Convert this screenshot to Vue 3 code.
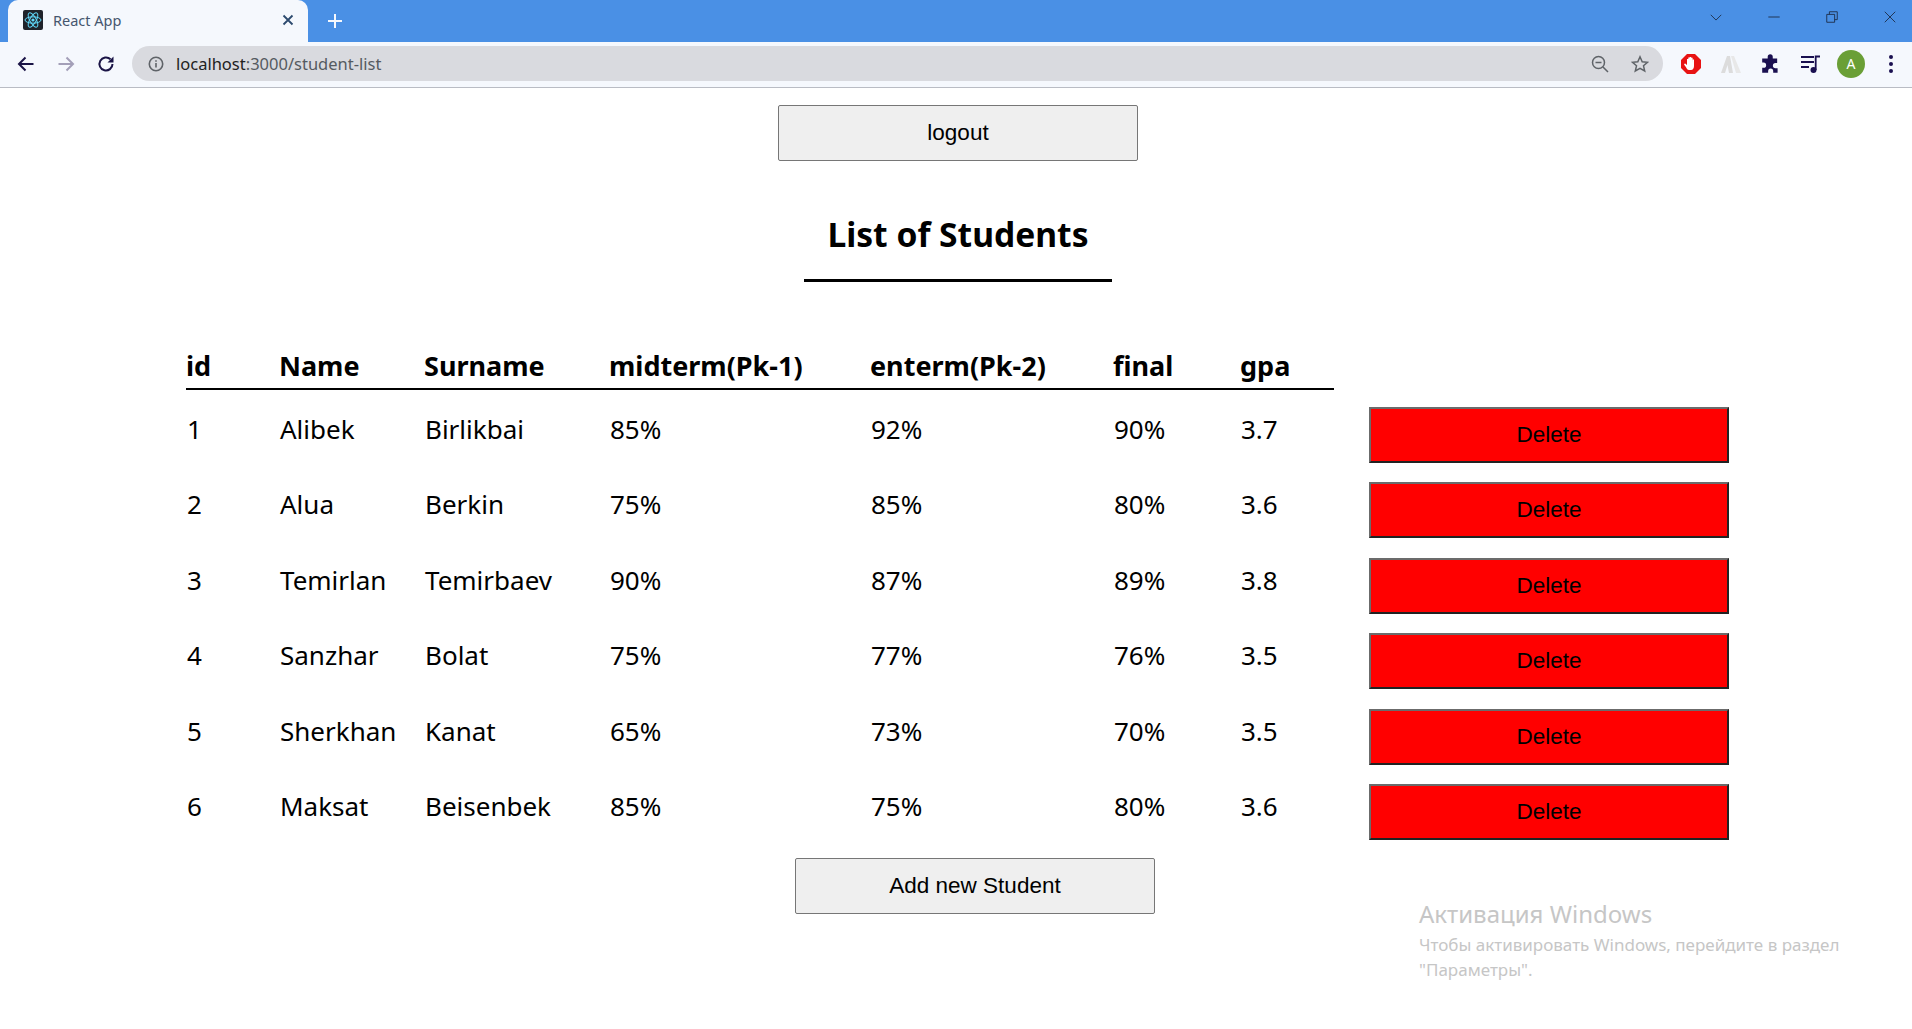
<template>
  <div class="page">
    <!-- Browser chrome -->
    <header class="tabstrip">
      <div class="tab">
        <svg class="favicon" viewBox="0 0 20 20">
          <rect width="20" height="20" rx="2" fill="#20232a" />
          <g fill="none" stroke="#61dafb" stroke-width="1">
            <ellipse cx="10" cy="10" rx="8" ry="3.2" />
            <ellipse cx="10" cy="10" rx="8" ry="3.2" transform="rotate(60 10 10)" />
            <ellipse cx="10" cy="10" rx="8" ry="3.2" transform="rotate(120 10 10)" />
          </g>
          <circle cx="10" cy="10" r="1.6" fill="#61dafb" />
        </svg>
        <span class="tab-title">React App</span>
        <svg class="tab-close" viewBox="0 0 12 12">
          <path d="M1.5 1.5l9 9M10.5 1.5l-9 9" stroke="#2c4a6e" stroke-width="1.8" fill="none" />
        </svg>
      </div>
      <svg class="new-tab" viewBox="0 0 16 16">
        <path d="M8 1v14M1 8h14" stroke="#f5f8fd" stroke-width="2" fill="none" />
      </svg>
      <div class="win-controls">
        <svg viewBox="0 0 16 16" class="win-icon"><path d="M2 5.5l6 6 6-6" stroke="#1c2a44" stroke-width="1" fill="none" /></svg>
        <svg viewBox="0 0 16 16" class="win-icon"><path d="M1.5 8h13" stroke="#1c2a44" stroke-width="1" fill="none" /></svg>
        <svg viewBox="0 0 16 16" class="win-icon"><path d="M2 5h9v9H2zM5 5V2h9v9h-3" stroke="#1c2a44" stroke-width="1" fill="none" /></svg>
        <svg viewBox="0 0 16 16" class="win-icon"><path d="M2 2l12 12M14 2L2 14" stroke="#1c2a44" stroke-width="1" fill="none" /></svg>
      </div>
    </header>

    <nav class="toolbar">
      <svg class="nav-icon" viewBox="0 0 20 20"><path d="M17.5 10H3.5M9.5 3.5L3 10l6.500 6.500" stroke="#1a1446" stroke-width="2" fill="none" /></svg>
      <svg class="nav-icon" viewBox="0 0 20 20"><path d="M2.500 10h14M10.500 3.500L17 10l-6.500 6.500" stroke="#a39fb8" stroke-width="2" fill="none" /></svg>
      <svg class="nav-icon" viewBox="0 0 20 20">
        <path d="M16.500 10a6.500 6.500 0 1 1-2-4.700" stroke="#1a1446" stroke-width="2" fill="none" />
        <path d="M17.500 2.500v6h-6z" fill="#1a1446" />
      </svg>
      <div class="omnibox">
        <svg class="info" viewBox="0 0 16 16">
          <circle cx="8" cy="8" r="6.700" stroke="#5f6368" stroke-width="1.600" fill="none" />
          <path d="M8 7v4.500M8 4.300v1.500" stroke="#5f6368" stroke-width="1.600" fill="none" />
        </svg>
        <span class="url">localhost<span class="url-dim">:3000/student-list</span></span>
        <svg class="omni-icon zoom-out" viewBox="0 0 18 18">
          <circle cx="7.500" cy="7.500" r="6" stroke="#5f6368" stroke-width="1.500" fill="none" />
          <path d="M12 12l5 5M4.500 7.500h6" stroke="#5f6368" stroke-width="1.500" fill="none" />
        </svg>
        <svg class="omni-icon star" viewBox="0 0 18 18">
          <path d="M9 1.800l2.200 4.900 5.300.6-4 3.500 1.200 5.200L9 13.300 4.300 16l1.200-5.200-4-3.500 5.300-.6z" stroke="#5f6368" stroke-width="1.500" fill="none" />
        </svg>
      </div>
      <div class="extensions">
        <svg class="ext" viewBox="0 0 22 22">
          <path d="M7 1h8l6 6v8l-6 6H7l-6-6V7z" fill="#e81313" />
          <path d="M7 16c-1-2-2.500-3.500-3-5l1.200-.6L7 12V6h1.300v4.500V4.500h1.400V10V4h1.500v6V4.800h1.400V10l.1-3.500h1.300V13c0 2-1 4-3 4H9c-.8 0-1.500-.4-2-1z" fill="#fff" />
        </svg>
        <svg class="ext" viewBox="0 0 22 22">
          <path d="M1 20L7 3h3l3 17h-4L7.500 12 5 20z" fill="#dcdcdc" />
          <path d="M11 3h3l7 17h-5z" fill="#e8e8e8" />
        </svg>
        <svg class="ext" viewBox="0 0 20 20">
          <path d="M7 3.500a2.300 2.300 0 0 1 4.600 0V5h4v4h-1.500a2.400 2.400 0 0 0 0 4.800H16V18H12v-1.500a2.300 2.300 0 0 0-4.600 0V18H2v-4.500h1.200a2.400 2.400 0 0 0 0-4.800H2V5h5z" fill="#1a1050" />
        </svg>
        <svg class="ext" viewBox="0 0 22 22">
          <path d="M1 4h13M1 9h13M1 14h8" stroke="#1a1050" stroke-width="1.800" fill="none" />
          <circle cx="13.500" cy="17" r="3" fill="#1a1050" />
          <path d="M15.700 17V3.500H20" stroke="#1a1050" stroke-width="1.800" fill="none" />
        </svg>
        <div class="avatar">A</div>
        <svg class="ext menu" viewBox="0 0 6 20">
          <circle cx="3" cy="3" r="2" fill="#1a1050" />
          <circle cx="3" cy="10" r="2" fill="#1a1050" />
          <circle cx="3" cy="17" r="2" fill="#1a1050" />
        </svg>
      </div>
    </nav>

    <!-- Page content -->
    <main class="content">
      <button class="btn logout" type="button">logout</button>

      <h1 class="title">List of Students</h1>

      <table class="students">
        <colgroup>
          <col v-for="w in colWidths" :key="w.key" :style="{ width: w.px + 'px' }" />
        </colgroup>
        <thead>
          <tr>
            <th v-for="h in headers" :key="h">{{ h }}</th>
          </tr>
        </thead>
        <tbody>
          <tr v-for="s in students" :key="s.id">
            <td>{{ s.id }}</td>
            <td>{{ s.name }}</td>
            <td>{{ s.surname }}</td>
            <td>{{ s.midterm }}</td>
            <td>{{ s.enterm }}</td>
            <td>{{ s.final }}</td>
            <td>{{ s.gpa }}</td>
            <td class="action">
              <button class="btn delete" type="button">Delete</button>
            </td>
          </tr>
        </tbody>
      </table>

      <button class="btn add" type="button">Add new Student</button>

      <div class="watermark">
        <div class="wm-title">Активация Windows</div>
        <div class="wm-text">Чтобы активировать Windows, перейдите в раздел<br />"Параметры".</div>
      </div>
    </main>
  </div>
</template>

<script setup>
const headers = ["id", "Name", "Surname", "midterm(Pk-1)", "enterm(Pk-2)", "final", "gpa", ""];

const colWidths = [
  { key: "id", px: 93 },
  { key: "name", px: 145 },
  { key: "surname", px: 185 },
  { key: "midterm", px: 261 },
  { key: "enterm", px: 243 },
  { key: "final", px: 127 },
  { key: "gpa", px: 94 },
  { key: "action", px: 395 },
];

const students = [
  { id: 1, name: "Alibek", surname: "Birlikbai", midterm: "85%", enterm: "92%", final: "90%", gpa: "3.7" },
  { id: 2, name: "Alua", surname: "Berkin", midterm: "75%", enterm: "85%", final: "80%", gpa: "3.6" },
  { id: 3, name: "Temirlan", surname: "Temirbaev", midterm: "90%", enterm: "87%", final: "89%", gpa: "3.8" },
  { id: 4, name: "Sanzhar", surname: "Bolat", midterm: "75%", enterm: "77%", final: "76%", gpa: "3.5" },
  { id: 5, name: "Sherkhan", surname: "Kanat", midterm: "65%", enterm: "73%", final: "70%", gpa: "3.5" },
  { id: 6, name: "Maksat", surname: "Beisenbek", midterm: "85%", enterm: "75%", final: "80%", gpa: "3.6" },
];
</script>

<style>
html, body { margin: 0; background: #fff; overflow: hidden; }
</style>

<style scoped>
.page {
  height: 1029px;
  display: flex;
  flex-direction: column;
  font-family: "Noto Sans", "Open Sans", sans-serif;
  color: #000;
}

.tabstrip {
  height: 42px;
  flex: none;
  background: #4a90e5;
  display: flex;
  align-items: flex-end;
  padding-left: 8px;
}
.tab {
  width: 300px;
  height: 42px;
  box-sizing: border-box;
  background: #f5f8fd;
  border-radius: 10px 10px 0 0;
  display: flex;
  align-items: center;
  padding: 0 12px 3px 15px;
}
.favicon { width: 20px; height: 20px; }
.tab-title {
  margin-left: 10px;
  font-size: 14.5px;
  color: #45566e;
  flex: 1;
}
.tab-close { width: 12px; height: 12px; margin-right: 2px; }
.new-tab { width: 16px; height: 16px; margin: 0 0 13px 19px; flex: none; }
.win-controls {
  margin-left: auto;
  align-self: flex-start;
  display: flex;
  gap: 44px;
  padding: 10px 15px 0 0;
}
.win-icon { width: 14px; height: 14px; overflow: visible; }

.toolbar {
  height: 46px;
  flex: none;
  box-sizing: border-box;
  background: #f5f8fd;
  border-bottom: 1px solid #b9bcc4;
  display: flex;
  align-items: center;
  padding: 0 0 2px 16px;
}
.nav-icon { width: 20px; height: 20px; margin-right: 20px; flex: none; }
.omnibox {
  width: 1531px;
  margin-left: -4px;
  height: 35px;
  flex: none;
  box-sizing: border-box;
  background: #d9dadf;
  border-radius: 18px;
  display: flex;
  align-items: center;
  padding: 0 14px 0 16px;
}
.info { width: 16px; height: 16px; flex: none; }
.url { margin-left: 12px; font-size: 16.5px; color: #222; flex: 1; }
.url-dim { color: #555a61; }
.omni-icon { width: 18px; height: 18px; flex: none; }
.star { margin-left: 22px; }

.extensions {
  display: flex;
  align-items: center;
  margin-left: 17px;
}
.ext { width: 22px; height: 22px; margin-right: 18px; flex: none; }
.avatar {
  width: 28px;
  height: 28px;
  border-radius: 50%;
  background: #6a9f36;
  color: #fff;
  font-size: 14px;
  display: flex;
  align-items: center;
  justify-content: center;
  margin: 0 23px 0 -3px;
}
.menu { width: 6px; height: 20px; margin: 0; }

.content {
  flex: 1;
  position: relative;
  display: flex;
  flex-direction: column;
  padding: 17px 0 0 186px;
}

.btn {
  width: 360px;
  height: 56px;
  box-sizing: border-box;
  font-family: "Liberation Sans", Arial, sans-serif;
  font-size: 22.5px;
  color: #000;
  background: #efefef;
  border: 1px solid #767676;
  border-radius: 2px;
  padding: 0;
}
.logout { margin-left: 592px; }
.add { margin: -1px 0 0 609px; }

.title {
  align-self: flex-start;
  width: 308px;
  margin: 49px 0 0 618px;
  padding-bottom: 21px;
  border-bottom: 3px solid #000;
  text-align: center;
  font-size: 33.6px;
  line-height: 48px;
  font-weight: 700;
}

.students {
  margin-top: 66px;
  border-collapse: collapse;
  table-layout: fixed;
  width: 1543px;
  font-size: 26px;
}
.students th {
  text-align: left;
  font-size: 27px;
  font-weight: 700;
  line-height: 36px;
  padding: 0 0 4px 0;
  height: 39px;
  box-sizing: border-box;
}
.students thead th:not(:last-child) { border-bottom: 2px solid #000; }
/* gap between the header rule and the first row */
.students tbody::before {
  content: "";
  display: table-row;
  height: 18px;
}
.students td {
  height: 75.4px;
  padding: 4px 0 0 1px;
  vertical-align: top;
  line-height: 36px;
  box-sizing: border-box;
}
.students td.action { padding: 0 0 0 35px; }

.delete {
  display: block;
  background: #f00;
  border: 2px solid;
  border-color: #6b6b6b #222 #222 #6b6b6b;
  border-radius: 0;
}

.watermark {
  position: absolute;
  left: 1419px;
  top: 808px;
  color: #c6c6c6;
}
.wm-title { font-size: 24px; line-height: 36px; }
.wm-text { font-size: 17px; line-height: 25px; }
</style>
